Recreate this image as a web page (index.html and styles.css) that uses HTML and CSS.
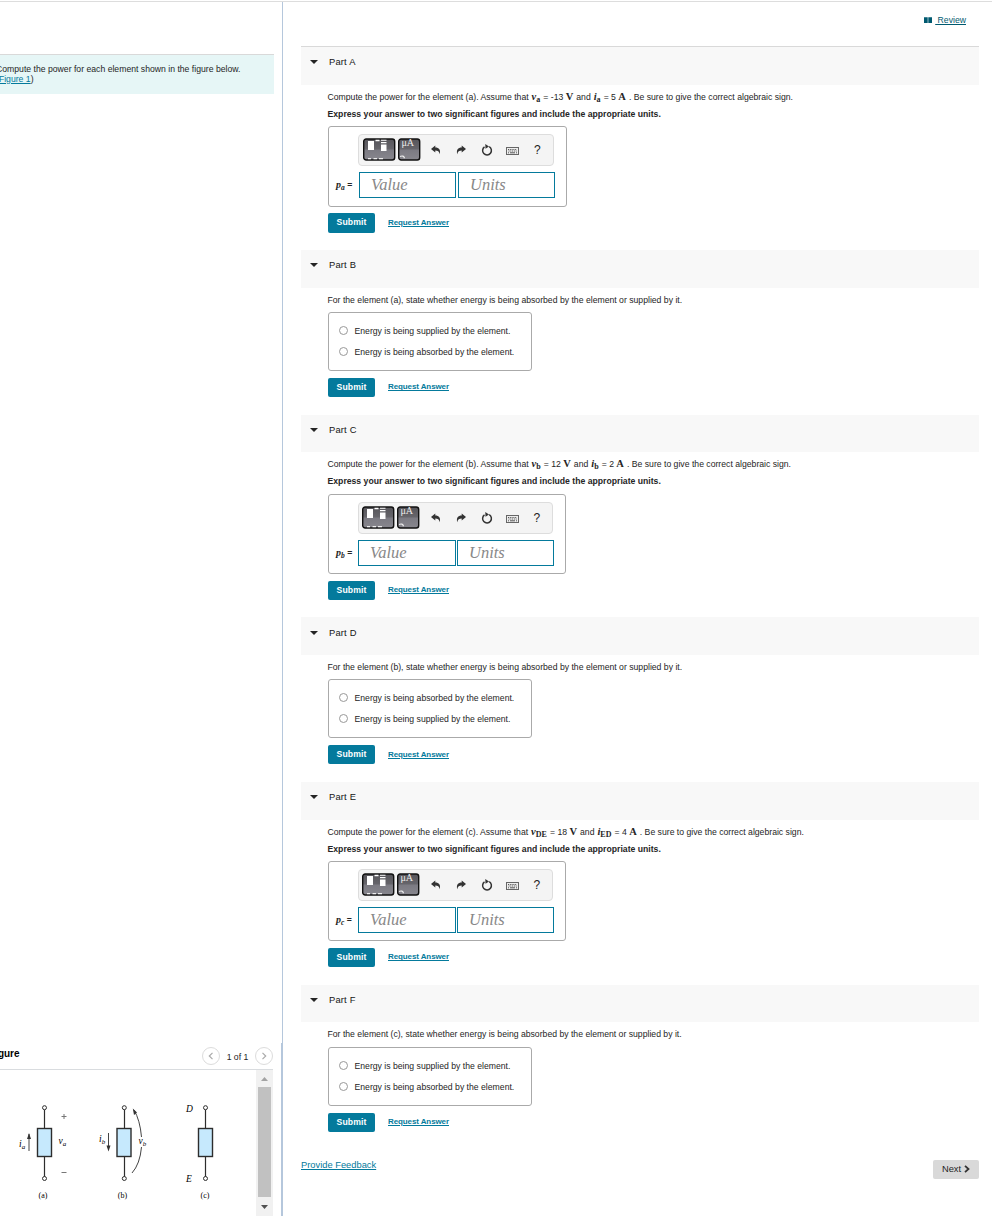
FILE: index.html
```html
<!DOCTYPE html>
<html lang="en">

<head>
    <meta charset="UTF-8">
    <meta name="viewport" content="width=device-width, initial-scale=1.0">
    <title>Power of Circuit Elements</title>
    <link rel="stylesheet" href="styles.css">
</head>

<body>
    <!-- shared icons -->
    <svg class="sprite" width="0" height="0">
        <defs>
            <linearGradient id="key" x1="0" y1="0" x2="0" y2="1">
                <stop offset="0" stop-color="#56555a" />
                <stop offset="0.48" stop-color="#66656b" />
                <stop offset="0.52" stop-color="#7b7a82" />
                <stop offset="1" stop-color="#88878e" />
            </linearGradient>
        </defs>
        <symbol id="templates" viewBox="0 0 33 23">
            <rect x=".7" y="1" width="31" height="21" rx="2.5" fill="url(#key)" stroke="#111" stroke-width="1.4" />
            <path d="M5 3h6v9H5zM18 6.500h5.500v6.500H18zM12.500 1.700h4v1.500h-4zM18 1.700h5.500v1h-5.500zM18 4h5.500v1.200h-5.500z" fill="#fff" />
            <path d="M5 20.600h3M10.500 20.600h3.500M16 20.600h4" stroke="#eee" stroke-width="1.300" />
        </symbol>
        <symbol id="symbols" viewBox="0 0 23 23">
            <rect x=".7" y="1" width="21" height="21" rx="2.5" fill="url(#key)" stroke="#111" stroke-width="1.4" />
            <text x="3.500" y="8" font-family="Liberation Serif, serif" font-size="10" fill="#eee">μA</text>
            <path d="M2 18.500q3.500-1.500 4.500 1.700" fill="none" stroke="#eee" stroke-width="1.200" />
        </symbol>
        <symbol id="undo" viewBox="0 0 10 10">
            <path d="M0 4L4.300 .6V2.600C8 2.600 9.800 4.800 8.800 9.200C8.200 6.600 6.800 5.600 4.300 5.600V7.600Z" fill="#333" />
        </symbol>
        <symbol id="redo" viewBox="0 0 10 10">
            <path d="M10 4L5.700 .6V2.600C2 2.600 .2 4.800 1.200 9.200C1.800 6.600 3.200 5.600 5.700 5.600V7.600Z" fill="#333" />
        </symbol>
        <symbol id="reset" viewBox="0 0 12 12">
            <path d="M8.200 2.700A4.400 4.400 0 1 1 3.500 2.900" fill="none" stroke="#333" stroke-width="1.500" />
            <path d="M4.300 0L8 2.500L4.500 4.800Z" fill="#333" />
        </symbol>
        <symbol id="keyboard" viewBox="0 0 13 8">
            <rect x=".5" y=".5" width="12" height="7" fill="#eee" stroke="#666" />
            <path d="M2 2.500h9M2.500 4h8.500" stroke="#555" stroke-width="1" stroke-dasharray="1 .8" />
            <path d="M2 5.800h1M4 5.800h5M10 5.800h1" stroke="#555" stroke-width="1" />
        </symbol>
    </svg>

    <div class="page">
        <aside class="left">
            <div class="problem">
                <p>Compute the power for each element shown in the figure below.</p>
                <p>(<a href="#">Figure 1</a>)</p>
            </div>

            <div class="figure">
                <div class="figure-head">
                    <h2>Figure</h2>
                    <div class="pager">
                        <button class="round"><svg width="6" height="8" viewBox="0 0 6 8"><path d="M4.500 .8L1.300 4L4.500 7.200" /></svg></button>
                        <span>1 of 1</span>
                        <button class="round"><svg width="6" height="8" viewBox="0 0 6 8"><path d="M1.500 .8L4.700 4L1.500 7.200" /></svg></button>
                    </div>
                </div>
                <div class="figure-body">
                    <svg class="circuit" width="256" height="146" viewBox="0 1070 256 146">
                        <g class="wires">
                            <path d="M44.500 1109.500V1177M124.500 1109.500V1177M205.500 1109.500V1177" />
                            <rect x="37.500" y="1128.500" width="14" height="28" />
                            <rect x="117" y="1128.500" width="14" height="28" />
                            <rect x="198.500" y="1128.500" width="14" height="28" />
                            <circle cx="44.500" cy="1107.700" r="2" />
                            <circle cx="44.500" cy="1178.500" r="2" />
                            <circle cx="124.300" cy="1107.700" r="2" />
                            <circle cx="124.300" cy="1178.500" r="2" />
                            <circle cx="205.500" cy="1107.700" r="2" />
                            <circle cx="205.500" cy="1178.500" r="2" />
                        </g>
                        <g class="arrows">
                            <path d="M29 1151V1134M108.500 1133V1150" />
                            <path d="M134 1110Q140 1120 141.500 1137M141.500 1147Q140 1164 132 1173" />
                            <path class="tip" d="M29 1133l-2 6h4zM108.500 1151.500l-2-6h4zM132.800 1108.500l1.200 6.500 3-2.500z" />
                        </g>
                        <g class="labels">
                            <text x="19" y="1147">i<tspan class="small" dy="2">a</tspan></text>
                            <text x="58.500" y="1144">v<tspan class="small" dy="2">a</tspan></text>
                            <text x="99" y="1142">i<tspan class="small" dy="2">b</tspan></text>
                            <text x="138.500" y="1144">v<tspan class="small" dy="2">b</tspan></text>
                            <text x="186" y="1111.500">D</text>
                            <text x="186" y="1182">E</text>
                        </g>
                        <path class="sign" d="M61.500 1116.500h5M64 1114v5M61.500 1172.500h5" />
                        <g class="captions">
                            <text x="43" y="1198">(a)</text>
                            <text x="122.500" y="1198">(b)</text>
                            <text x="205" y="1198">(c)</text>
                        </g>
                    </svg>
                    <div class="scrollbar">
                        <svg width="7" height="4" viewBox="0 0 7 4"><path d="M0 4L3.500 0L7 4Z" fill="#a3a3a3" /></svg>
                        <div class="thumb"></div>
                        <svg width="7" height="4" viewBox="0 0 7 4"><path d="M0 0L3.500 4L7 0Z" fill="#505050" /></svg>
                    </div>
                </div>
            </div>
        </aside>

        <div class="divider"></div>

        <main class="right">
            <div class="review">
                <svg width="8" height="6" viewBox="0 0 8 6"><path d="M0 .3H3.700V6H0zM4.300 .3H8V6H4.300z" fill="#005a70" /></svg>
                <a href="#">&nbsp;Review</a>
            </div>

            <section class="part value-part first">
                <div class="part-head"><i></i><h3>Part A</h3></div>
                <div class="part-body">
                    <p class="text">Compute the power for the element (a). Assume that <em>v</em><sub>a</sub> = -13 <b>V</b> and <em>i</em><sub>a</sub> = 5 <b>A</b> . Be sure to give the correct algebraic sign.</p>
                    <p class="hint">Express your answer to two significant figures and include the appropriate units.</p>
                    <div class="answer">
                        <div class="toolbar">
                            <svg width="33" height="23"><use href="#templates" /></svg>
                            <svg width="23" height="23"><use href="#symbols" /></svg>
                            <svg class="tool" width="10" height="10"><use href="#undo" /></svg>
                            <svg class="tool" width="10" height="10"><use href="#redo" /></svg>
                            <svg class="tool reset" width="12" height="12"><use href="#reset" /></svg>
                            <svg class="tool keyboard" width="13" height="8"><use href="#keyboard" /></svg>
                            <span>?</span>
                        </div>
                        <div class="fields">
                            <label><em>p</em><sub><em>a</em></sub> =</label>
                            <div class="field">Value</div>
                            <div class="field">Units</div>
                        </div>
                    </div>
                    <div class="actions"><button class="submit">Submit</button><a href="#">Request Answer</a></div>
                </div>
            </section>

            <section class="part">
                <div class="part-head"><i></i><h3>Part B</h3></div>
                <div class="part-body">
                    <p class="text">For the element (a), state whether energy is being absorbed by the element or supplied by it.</p>
                    <div class="choices">
                        <label><input type="radio" name="b">Energy is being supplied by the element.</label>
                        <label><input type="radio" name="b">Energy is being absorbed by the element.</label>
                    </div>
                    <div class="actions"><button class="submit">Submit</button><a href="#">Request Answer</a></div>
                </div>
            </section>

            <section class="part value-part">
                <div class="part-head"><i></i><h3>Part C</h3></div>
                <div class="part-body">
                    <p class="text">Compute the power for the element (b). Assume that <em>v</em><sub>b</sub> = 12 <b>V</b> and <em>i</em><sub>b</sub> = 2 <b>A</b> . Be sure to give the correct algebraic sign.</p>
                    <p class="hint">Express your answer to two significant figures and include the appropriate units.</p>
                    <div class="answer">
                        <div class="toolbar">
                            <svg width="33" height="23"><use href="#templates" /></svg>
                            <svg width="23" height="23"><use href="#symbols" /></svg>
                            <svg class="tool" width="10" height="10"><use href="#undo" /></svg>
                            <svg class="tool" width="10" height="10"><use href="#redo" /></svg>
                            <svg class="tool reset" width="12" height="12"><use href="#reset" /></svg>
                            <svg class="tool keyboard" width="13" height="8"><use href="#keyboard" /></svg>
                            <span>?</span>
                        </div>
                        <div class="fields">
                            <label><em>p</em><sub><em>b</em></sub> =</label>
                            <div class="field">Value</div>
                            <div class="field">Units</div>
                        </div>
                    </div>
                    <div class="actions"><button class="submit">Submit</button><a href="#">Request Answer</a></div>
                </div>
            </section>

            <section class="part">
                <div class="part-head"><i></i><h3>Part D</h3></div>
                <div class="part-body">
                    <p class="text">For the element (b), state whether energy is being absorbed by the element or supplied by it.</p>
                    <div class="choices">
                        <label><input type="radio" name="d">Energy is being absorbed by the element.</label>
                        <label><input type="radio" name="d">Energy is being supplied by the element.</label>
                    </div>
                    <div class="actions"><button class="submit">Submit</button><a href="#">Request Answer</a></div>
                </div>
            </section>

            <section class="part value-part">
                <div class="part-head"><i></i><h3>Part E</h3></div>
                <div class="part-body">
                    <p class="text">Compute the power for the element (c). Assume that <em>v</em><sub>DE</sub> = 18 <b>V</b> and <em>i</em><sub>ED</sub> = 4 <b>A</b> . Be sure to give the correct algebraic sign.</p>
                    <p class="hint">Express your answer to two significant figures and include the appropriate units.</p>
                    <div class="answer">
                        <div class="toolbar">
                            <svg width="33" height="23"><use href="#templates" /></svg>
                            <svg width="23" height="23"><use href="#symbols" /></svg>
                            <svg class="tool" width="10" height="10"><use href="#undo" /></svg>
                            <svg class="tool" width="10" height="10"><use href="#redo" /></svg>
                            <svg class="tool reset" width="12" height="12"><use href="#reset" /></svg>
                            <svg class="tool keyboard" width="13" height="8"><use href="#keyboard" /></svg>
                            <span>?</span>
                        </div>
                        <div class="fields">
                            <label><em>p</em><sub><em>c</em></sub> =</label>
                            <div class="field">Value</div>
                            <div class="field">Units</div>
                        </div>
                    </div>
                    <div class="actions"><button class="submit">Submit</button><a href="#">Request Answer</a></div>
                </div>
            </section>

            <section class="part">
                <div class="part-head"><i></i><h3>Part F</h3></div>
                <div class="part-body">
                    <p class="text">For the element (c), state whether energy is being absorbed by the element or supplied by it.</p>
                    <div class="choices">
                        <label><input type="radio" name="f">Energy is being supplied by the element.</label>
                        <label><input type="radio" name="f">Energy is being absorbed by the element.</label>
                    </div>
                    <div class="actions"><button class="submit">Submit</button><a href="#">Request Answer</a></div>
                </div>
            </section>

            <footer>
                <a href="#">Provide Feedback</a>
                <button class="next">Next <svg width="6" height="8" viewBox="0 0 6 8"><path d="M1 .8L4.500 4L1 7.200" /></svg></button>
            </footer>
        </main>
    </div>
</body>

</html>
```
FILE: styles.css
```css
* {
    box-sizing: border-box;
}

body {
    margin: 0;
    font-family: "Liberation Sans", Arial, sans-serif;
    font-size: 8.67px;
    line-height: 10px;
    color: #252525;
    background: #fff;
}

h2, h3, p {
    margin: 0;
}

a {
    color: #047a9c;
}

button {
    font-family: inherit;
    border: none;
    padding: 0;
}

.sprite {
    display: block;
}

.page {
    display: flex;
    height: 1216px;
    overflow: hidden;
    padding-top: 1px;
    background: linear-gradient(#ddd, #ddd) 0 1px / 100% 1px no-repeat;
}

/* Left column */
.left {
    width: 274px;
    display: flex;
    flex-direction: column;
    justify-content: space-between;
    padding-top: 53px;
    overflow: hidden;
}

.problem {
    height: 40px;
    padding-top: 9px;
    border-top: 1px solid #d9d9d9;
    background: #e6f6f6;
    white-space: nowrap;
}

.problem p {
    margin-left: -4px;
}

.figure-head {
    height: 30px;
    width: 273px;
    display: flex;
    justify-content: space-between;
    border-bottom: 1px solid #d9dcdf;
}

.figure-head h2 {
    margin: 8px 0 0 -11px;
    font-size: 10px;
    line-height: 12px;
    color: #000;
}

.pager {
    display: flex;
    align-items: center;
    gap: 6.7px;
    height: 32px;
}

.round {
    display: flex;
    align-items: center;
    justify-content: center;
    width: 18px;
    height: 18px;
    border: 1px solid #dcdcdc;
    border-radius: 50%;
    background: #fff;
}

.round path {
    fill: none;
    stroke: #aaa;
    stroke-width: 1.2;
}

.pager span {
    padding-top: 2px;
}

.figure-body {
    display: flex;
    height: 146px;
}

.circuit {
    display: block;
}

.wires {
    fill: #c6e9fd;
    stroke: #2d2d2d;
    stroke-width: 1.2;
}

.wires rect {
    stroke-width: 1.4;
}

.wires circle {
    fill: #fff;
    stroke-width: 1;
}

.arrows path,
.sign {
    fill: none;
    stroke: #444;
    stroke-width: 1;
}

.sign {
    stroke: #777;
}

.arrows .tip {
    fill: #333;
    stroke: none;
}

.labels {
    font: italic 9.5px "Liberation Serif", serif;
}

.labels .small {
    font-size: 7px;
}

.captions {
    font: 8px "Liberation Serif", serif;
    text-anchor: middle;
}

.scrollbar {
    width: 17px;
    display: flex;
    flex-direction: column;
    align-items: center;
    justify-content: space-between;
    padding: 7px 0;
    background: #f1f1f1;
}

.thumb {
    width: 13px;
    height: 110px;
    margin-bottom: 2px;
    background: #c1c1c1;
}

/* the line gets thicker next to the figure panel */
.divider {
    width: 2px;
    margin: 1px 0 0 7px;
    background:
        linear-gradient(#b5c7dc, #b5c7dc) 1px 0 / 1px 100% no-repeat,
        linear-gradient(#b5c7dc, #b5c7dc) 0 100% / 2px 173px no-repeat;
}

/* Right column */
.right {
    width: 678px;
    margin-left: 18px;
    flex: none;
}

.review {
    height: 45px;
    display: flex;
    justify-content: flex-end;
    gap: 3px;
    padding: 14px 13px 0 0;
}

.review svg {
    margin-top: 2px;
}

.review a {
    color: #005a70;
}

.part {
    height: 164.7px;
}

.value-part {
    height: 202.7px;
}

.value-part.first {
    height: 204px;
    border-top: 1px solid #d9d9d9;
}

.part-head {
    height: 37.5px;
    display: flex;
    padding: 10.2px 0 0 9px;
    background: #f8f8f8;
}

.part-head i {
    width: 0;
    height: 0;
    margin: 3px 11px 0 0;
    border: 4px solid transparent;
    border-top-color: #252525;
    border-bottom: none;
}

.part-head h3 {
    font-size: 9.33px;
    font-weight: 500;
    line-height: 11px;
    letter-spacing: 0.2px;
    color: #151515;
}

.part-body {
    padding-left: 27px;
}

.text {
    height: 10px;
    margin: 7px 0 0 -0.5px;
    white-space: nowrap;
}

.text em, .text sub, .text b,
.fields em, .fields sub {
    font-family: "Liberation Serif", serif;
    font-weight: bold;
}

.text em, .text b {
    font-size: 10.5px;
}

.text em {
    margin-left: 0.5px;
}

.text b {
    margin-right: 0.6px;
}

sub {
    font-size: 7px;
    line-height: 0;
    vertical-align: -2px;
}

.text sub {
    font-size: 8px;
    font-weight: bold;
    margin-right: 0.7px;
}

.hint {
    margin: 7px 0 0 -0.5px;
    font-weight: bold;
    white-space: nowrap;
}

.answer {
    width: 239px;
    height: 81px;
    margin-top: 7px;
    padding: 7px 0 0 6px;
    border: 1px solid #aaa;
    border-radius: 3px;
}

.value-part:not(.first) .answer {
    width: 238px;
    height: 80px;
    margin-top: 7.4px;
}

.toolbar {
    display: flex;
    align-items: center;
    width: 196px;
    height: 32px;
    margin-left: 23px;
    padding-left: 4px;
    border: 1px solid #ddd;
    border-radius: 4px;
    background: #f4f4f4;
}

.toolbar svg {
    flex: none;
}

.toolbar svg + svg {
    margin-left: 1.5px;
}

.toolbar .tool:nth-of-type(3) {
    margin-left: 10px;
}

.toolbar .tool:nth-of-type(4) {
    margin-left: 15px;
}

.toolbar .reset {
    margin-left: 15px;
}

.toolbar .keyboard {
    margin: 3px 0 0 13px;
}

.toolbar span {
    margin-left: 15.5px;
    font-size: 12px;
    color: #222;
}

.fields {
    display: flex;
    gap: 2px;
    margin-top: 6px;
}

.fields label {
    width: 22px;
    padding: 8px 0 0 1px;
    white-space: nowrap;
    font-weight: bold;
}

.fields em {
    font-size: 10px;
}

.fields sub em {
    font-size: 7.5px;
}

.field {
    width: 97px;
    height: 26px;
    padding-left: 11px;
    border: 1px solid #047a9c;
    font: italic 16.5px/24px "Liberation Serif", serif;
    color: #888;
}

.value-part:not(.first) .toolbar {
    width: 195px;
    padding-left: 3px;
}

.value-part:not(.first) .tool:nth-of-type(3) {
    margin-left: 11px;
}

.value-part:not(.first) .toolbar span {
    margin-left: 15px;
}

.value-part:not(.first) .fields {
    gap: 1px;
}

.value-part:not(.first) .field:nth-of-type(1) {
    width: 98px;
}

.choices {
    width: 204px;
    height: 59px;
    margin-top: 7.3px;
    padding: 13px 0 0 10px;
    border: 1px solid #aaa;
    border-radius: 3px;
}

.choices label {
    display: flex;
    align-items: center;
    height: 10px;
    margin-bottom: 11px;
}

.choices input {
    appearance: none;
    width: 9px;
    height: 9px;
    margin: 0 6.5px 1px 0;
    border: 1px solid #999;
    border-radius: 50%;
}

.actions {
    display: flex;
    align-items: center;
    gap: 13px;
    margin-top: 7px;
}

.first .actions {
    margin-top: 6px;
}

.submit {
    width: 47px;
    height: 19px;
    padding-bottom: 1px;
    border-radius: 2px;
    background: #047a9c;
    color: #fff;
    font-size: 8.67px;
    font-weight: bold;
    letter-spacing: 0.1px;
}

.first .submit {
    height: 20px;
}

.actions a {
    font-size: 8px;
    font-weight: bold;
    letter-spacing: -0.1px;
}

footer {
    display: flex;
    justify-content: space-between;
    align-items: flex-start;
    padding-top: 10.7px;
}

footer a {
    font-size: 9.33px;
}

.next {
    display: flex;
    align-items: center;
    justify-content: center;
    gap: 3px;
    width: 46px;
    height: 19px;
    padding-bottom: 1px;
    border-radius: 2px;
    background: #d9d9d9;
    color: #252525;
    font-size: 9.33px;
}

.next path {
    fill: none;
    stroke: #333;
    stroke-width: 1.8;
}
```
